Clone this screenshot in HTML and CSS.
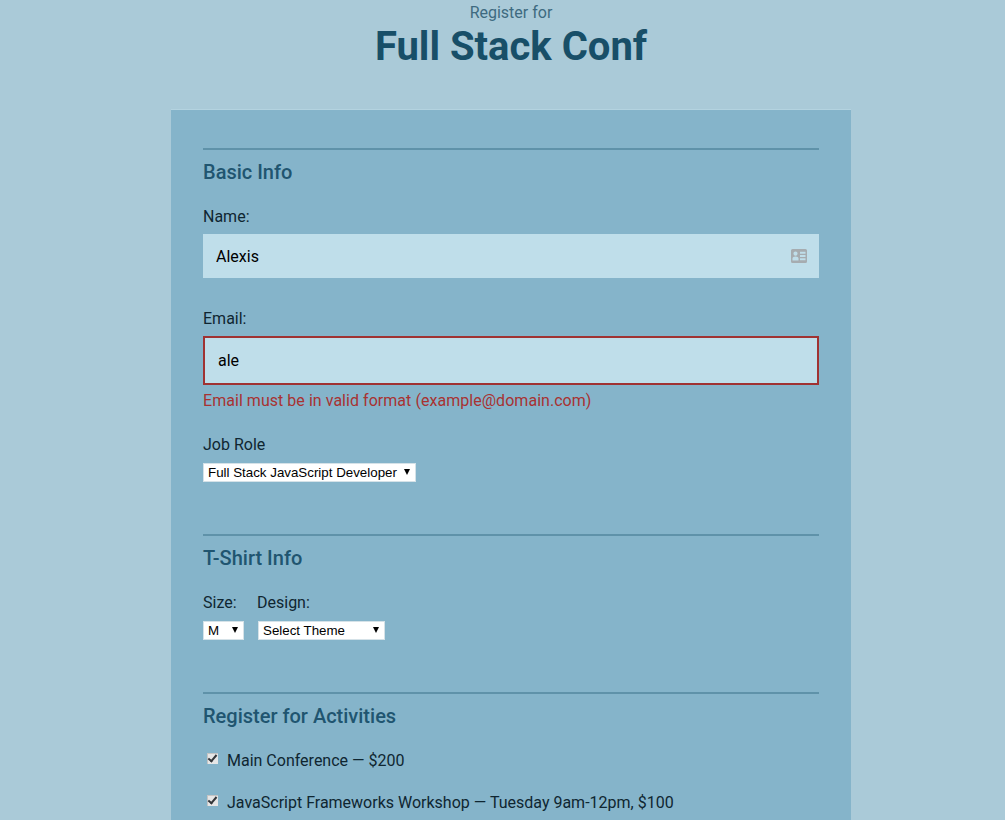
FILE: index.html
```html
<!DOCTYPE html>
<html lang="en">
<head>
  <meta charset="UTF-8">
  <meta name="viewport" content="width=device-width, initial-scale=1.0">
  <title>Register for Full Stack Conf</title>
  <link rel="stylesheet" href="styles.css">
</head>
<body>
  <header class="page-header">
    <span class="page-kicker">Register for</span>
    <h1 class="page-title">Full Stack Conf</h1>
  </header>
  <form class="reg-form">
    <fieldset class="section section-basic">
      <h2 class="section-title">Basic Info</h2>
      <label class="field-label" for="name">Name:</label>
      <div class="input-wrap">
        <input class="text-input" type="text" id="name" value="Alexis">
        <svg class="input-icon" width="16" height="14" viewBox="0 0 16 14">
          <path fill="#a6acb0" fill-rule="evenodd" d="M1.500 0h13A1.500 1.500 0 0 1 16 1.500v11a1.500 1.500 0 0 1-1.500 1.500h-13A1.500 1.500 0 0 1 0 12.500v-11A1.500 1.500 0 0 1 1.500 0zM4.500 2.500a2.100 2.100 0 1 0 0 4.200 2.100 2.100 0 0 0 0-4.200zM1.500 11.500h6V9.300c0-1-1.200-1.900-3-1.900s-3 .9-3 1.900zM9 2.800v2h5.500v-2zM9 6v2h5.500V6zM9 9.200v2h5.500v-2z"/>
        </svg>
      </div>
      <label class="field-label email-label" for="email">Email:</label>
      <input class="text-input text-input-error" type="text" id="email" value="ale">
      <p class="error-text">Email must be in valid format (example@domain.com)</p>
      <label class="field-label role-label" for="role">Job Role</label>
      <div class="select-wrap">
        <select class="select select-role" id="role">
          <option>Full Stack JavaScript Developer</option>
        </select>
      </div>
    </fieldset>
    <fieldset class="section section-shirt">
      <h2 class="section-title">T-Shirt Info</h2>
      <div class="shirt-row">
        <div class="shirt-col">
          <label class="field-label" for="size">Size:</label>
          <div class="select-wrap">
            <select class="select select-size" id="size"><option>M</option></select>
          </div>
        </div>
        <div class="shirt-col">
          <label class="field-label" for="design">Design:</label>
          <div class="select-wrap">
            <select class="select select-design" id="design"><option>Select Theme</option></select>
          </div>
        </div>
      </div>
    </fieldset>
    <fieldset class="section section-activities">
      <h2 class="section-title">Register for Activities</h2>
      <label class="activity"><input class="check" type="checkbox" checked> Main Conference — $200</label>
      <label class="activity"><input class="check" type="checkbox" checked> JavaScript Frameworks Workshop — Tuesday 9am-12pm, $100</label>
    </fieldset>
  </form>
</body>
</html>
```

FILE: styles.css
```css
html, body {
  height: 820px;
  overflow: hidden;
}
body {
  margin: 0;
  padding-left: 17px;
  background-color: #aacad8;
  color: #0f2631;
  font-family: Roboto, "Liberation Sans", sans-serif;
  font-size: 16px;
}
.page-header {
  height: 109px;
  text-align: center;
  box-sizing: border-box;
  padding-top: 4px;
}
.page-kicker {
  display: block;
  color: #3e6a80;
  font-size: 16px;
  line-height: 18px;
}
.page-title {
  margin: 1px 0 0;
  color: #184f68;
  font-size: 40px;
  font-weight: 700;
  line-height: 47px;
}
.reg-form {
  width: 680px;
  margin: 0 auto;
  box-sizing: border-box;
  padding: 38px 32px 0;
  background-color: #85b4ca;
  border-top: 1px solid #b4d3e0;
}
.section {
  margin: 0;
  padding: 0;
  border: 0;
  border-top: 2px solid #5f92a9;
}
.section-basic { height: 384px; }
.section-shirt { height: 156px; }
.section-title {
  margin: 10px 0 24px;
  color: #205570;
  font-size: 20px;
  font-weight: 500;
  line-height: 24px;
}
.field-label {
  display: block;
  margin-bottom: 8px;
  line-height: 18px;
}
.email-label { margin-top: 32px; }
.role-label {
  margin-top: 26px;
  margin-bottom: 9px;
}
.input-wrap { position: relative; }
.text-input {
  display: block;
  width: 100%;
  height: 44px;
  box-sizing: border-box;
  padding: 0 13px;
  border: 0;
  background-color: #bfdeea;
  color: #000;
  font-family: inherit;
  font-size: 16px;
}
.text-input-error {
  height: 49px;
  border: 2px solid #a03232;
}
.input-icon {
  position: absolute;
  top: 15px;
  right: 12px;
}
.error-text {
  margin: 6px 0 0;
  color: #a83232;
  letter-spacing: 0.04px;
  line-height: 19px;
}
.select-wrap {
  position: relative;
  display: inline-block;
  vertical-align: top;
}
.select-wrap::after {
  content: "";
  position: absolute;
  top: 6px;
  right: 6px;
  border-style: solid;
  border-width: 6px 3px 0;
  border-color: #000 transparent transparent;
  pointer-events: none;
}
.select {
  display: block;
  height: 19px;
  box-sizing: border-box;
  padding: 0 0 0 4px;
  border: 1px solid #d5e2e8;
  border-radius: 0;
  background-color: #fff;
  color: #000;
  font-family: "Liberation Sans", Arial, sans-serif;
  font-size: 13.33px;
  -webkit-appearance: none;
  appearance: none;
}
.select-role { width: 213px; }
.select-size { width: 41px; }
.select-design { width: 127px; }
.shirt-row {
  display: flex;
  gap: 13px;
}
.shirt-col .field-label { margin-bottom: 9px; }
.shirt-col:last-child .select-wrap { margin-left: 1px; }
.activity {
  display: flex;
  align-items: center;
  height: 18px;
  margin-bottom: 24px;
  gap: 8px;
}
.section-activities .section-title { margin-bottom: 23px; }
.check {
  position: relative;
  width: 11px;
  height: 11px;
  margin: -3px 1px 0 4px;
  background-color: #e6e6e6;
  box-shadow: inset 1px 1px 0 #c4c4c4;
  -webkit-appearance: none;
  appearance: none;
}
/* heavy tick like the old windows checkbox */
.check::after {
  content: "";
  position: absolute;
  left: 3px;
  top: 0;
  width: 3px;
  height: 7px;
  border: solid #33363a;
  border-width: 0 2px 2px 0;
  transform: rotate(40deg);
}
```
